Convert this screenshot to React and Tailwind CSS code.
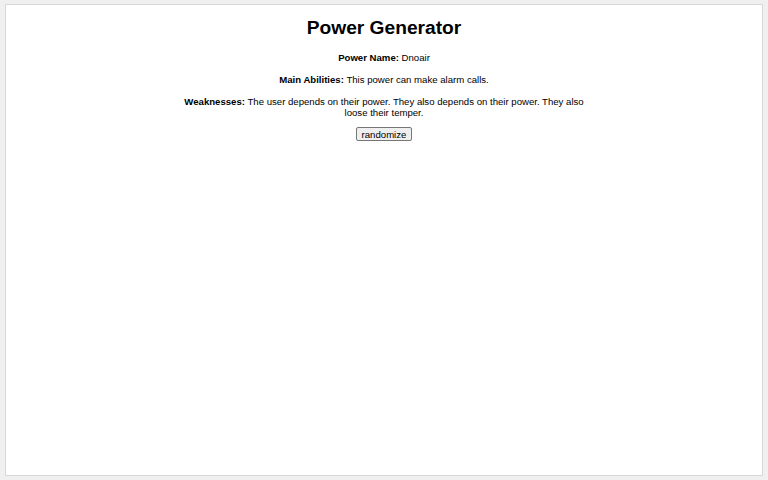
import { useState } from "react";

const names = ["Dnoair", "Velkor", "Sprazz", "Thimble", "Orvane"];
const abilities = [
  "This power can make alarm calls.",
  "This power can bend light around objects.",
  "This power can talk to houseplants.",
];
const weaknesses = [
  "The user depends on their power. They also depends on their power. They also loose their temper.",
  "The user gets tired quickly. They also forget things.",
];

const pick = (list) => list[Math.floor(Math.random() * list.length)];

export default function App() {
  const [power, setPower] = useState({
    name: names[0],
    ability: abilities[0],
    weakness: weaknesses[0],
  });

  const randomize = () =>
    setPower({ name: pick(names), ability: pick(abilities), weakness: pick(weaknesses) });

  return (
    <div className="min-h-screen bg-[#f0f0f0] pt-[4px] px-[5px] pb-[4px] font-['Liberation_Sans',Arial,sans-serif] text-black">
      <div className="h-[472px] border border-[#d8d8d8] bg-white flex flex-col items-center pt-[12px]">
        <h1 className="text-[19.2px] leading-[22px] font-bold">Power Generator</h1>

        <p className="mt-[12.7px] text-[9.6px] leading-[11px]">
          <b>Power Name:</b> {power.name}
        </p>
        <p className="mt-[11px] text-[9.6px] leading-[11px]">
          <b>Main Abilities:</b> {power.ability}
        </p>
        <p className="mt-[11px] w-[410px] text-center text-[9.6px] leading-[11px]">
          <b>Weaknesses:</b> {power.weakness}
        </p>

        <button
          onClick={randomize}
          className="mt-[9.6px] h-[14px] px-[4.5px] border border-[#767676] rounded-[2px] bg-[#efefef] text-[9.6px] leading-[11px]"
        >
          randomize
        </button>
      </div>
    </div>
  );
}
